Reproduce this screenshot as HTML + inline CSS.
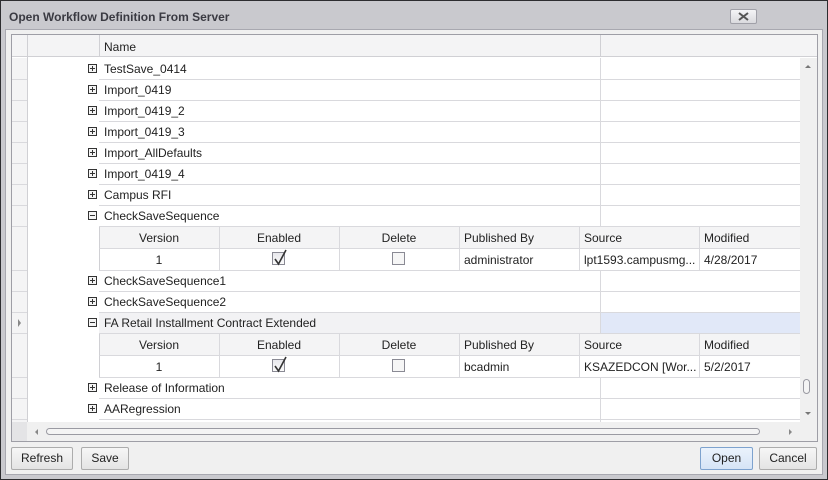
<!DOCTYPE html>
<html><head><style>
*{margin:0;padding:0;box-sizing:border-box}
body{width:828px;height:480px;overflow:hidden;background:#2d2d30;font-family:"Liberation Sans",sans-serif;font-size:12px;color:#222;position:relative}
.a{position:absolute}
.win{left:1px;top:1px;width:826px;height:478px;background:#c9c9ce}
.client{left:5px;top:29px;width:818px;height:446px;background:#f0f0f0;border:1px solid #a8a8b0}
.hl{position:absolute;height:1px;background:#d9d9dd}
.vl{position:absolute;width:1px;background:#d9d9dd}
.t{position:absolute;white-space:nowrap;line-height:14px}
.exp{position:absolute;width:9px;height:9px;border:1px solid #333;background:#f4f4f4}
.exp:before{content:"";position:absolute;left:1px;top:3px;width:5px;height:1px;background:#333}
.exp.p:after{content:"";position:absolute;left:3px;top:1px;width:1px;height:5px;background:#333}
.btn{position:absolute;height:23px;border:1px solid #acacac;border-radius:2px;background:linear-gradient(#f6f6f6,#e4e4e4);text-align:center;line-height:21px}
.cb{position:absolute;width:13px;height:13px;border:1px solid #8a8a94;background:linear-gradient(#e8e8ec,#fafafa)}
</style></head><body>
<div class="a win"></div>
<div class="t" style="left:9px;top:10px;font-weight:bold;color:#3a3a42;font-size:12px">Open Workflow Definition From Server</div>
<div class="a" style="left:730px;top:9px;width:27px;height:15px;border:1px solid #a0a0a8;border-radius:2px;background:linear-gradient(#f4f4f6,#dadade)"></div>
<svg class="a" style="left:738px;top:12px" width="11" height="9"><path d="M1 1L10 8M10 1L1 8" stroke="#555" stroke-width="2"/></svg>
<div class="a client"></div>
<!-- grid -->
<div class="a" style="left:11px;top:34px;width:807px;height:408px;border:1px solid #9e9ea6;background:#fff"></div>
<div class="a" style="left:12px;top:35px;width:805px;height:22px;background:#f4f4f5;border-bottom:1px solid #d0d0d4"></div>
<div class="vl" style="left:27px;top:35px;height:387px;background:#d0d0d4"></div>
<div class="vl" style="left:99px;top:35px;height:22px;background:#d0d0d4"></div>
<div class="vl" style="left:600px;top:35px;height:22px;background:#d0d0d4"></div>
<div class="t" style="left:104px;top:40px">Name</div>
<div class="a" style="left:12px;top:58px;width:15px;height:364px;background:#f4f4f5"></div>
<!-- vertical scrollbar -->
<div class="a" style="left:800px;top:58px;width:17px;height:364px;background:#f0f0f0"></div>
<svg class="a" style="left:804px;top:64px" width="8" height="5"><path d="M1 4L4 1L7 4Z" fill="#777"/></svg>
<div class="a" style="left:803px;top:379px;width:7px;height:15px;border:1px solid #9a9aa2;border-radius:4px;background:#f4f4f4"></div>
<svg class="a" style="left:804px;top:411px" width="8" height="5"><path d="M1 1L4 4L7 1Z" fill="#777"/></svg>
<!-- horizontal scrollbar -->
<div class="a" style="left:12px;top:422px;width:805px;height:19px;background:#f0f0f0"></div>
<div class="a" style="left:12px;top:422px;width:15px;height:19px;background:#e4e4e6"></div>
<svg class="a" style="left:34px;top:428px" width="5" height="8"><path d="M4 1L1 4L4 7Z" fill="#888"/></svg>
<div class="a" style="left:46px;top:428px;width:714px;height:7px;border:1px solid #9a9aa2;border-radius:4px;background:#f4f4f4"></div>
<svg class="a" style="left:788px;top:428px" width="5" height="8"><path d="M1 1L4 4L1 7Z" fill="#888"/></svg>
<div id="rows"></div>
<!-- highlighted row -->
<div class="a" style="left:99px;top:313px;width:501px;height:20px;background:#f2f2f4"></div>
<div class="a" style="left:600px;top:313px;width:200px;height:20px;background:#e1e8f8"></div>
<svg class="a" style="left:17px;top:319px" width="5" height="8"><path d="M1 0L4 4L1 8Z" fill="#888"/></svg>

<!-- row lines (name area) -->
<div class="hl" style="left:99px;top:79px;width:701px"></div>
<div class="hl" style="left:99px;top:100px;width:701px"></div>
<div class="hl" style="left:99px;top:121px;width:701px"></div>
<div class="hl" style="left:99px;top:142px;width:701px"></div>
<div class="hl" style="left:99px;top:163px;width:701px"></div>
<div class="hl" style="left:99px;top:184px;width:701px"></div>
<div class="hl" style="left:99px;top:205px;width:701px"></div>
<div class="hl" style="left:99px;top:226px;width:701px"></div>
<div class="hl" style="left:99px;top:270px;width:701px"></div>
<div class="hl" style="left:99px;top:291px;width:701px"></div>
<div class="hl" style="left:99px;top:312px;width:701px"></div>
<div class="hl" style="left:99px;top:333px;width:701px"></div>
<div class="hl" style="left:99px;top:377px;width:701px"></div>
<div class="hl" style="left:99px;top:398px;width:701px"></div>
<div class="hl" style="left:99px;top:419px;width:701px"></div>
<div class="vl" style="left:600px;top:58px;height:169px"></div>
<div class="vl" style="left:600px;top:270px;height:64px"></div>
<div class="vl" style="left:600px;top:377px;height:45px"></div>
<!-- left column lines -->
<div class="hl" style="left:12px;top:79px;width:15px"></div><div class="hl" style="left:12px;top:100px;width:15px"></div>
<div class="hl" style="left:12px;top:121px;width:15px"></div><div class="hl" style="left:12px;top:142px;width:15px"></div>
<div class="hl" style="left:12px;top:163px;width:15px"></div><div class="hl" style="left:12px;top:184px;width:15px"></div>
<div class="hl" style="left:12px;top:205px;width:15px"></div><div class="hl" style="left:12px;top:226px;width:15px"></div>
<div class="hl" style="left:12px;top:270px;width:15px"></div><div class="hl" style="left:12px;top:291px;width:15px"></div>
<div class="hl" style="left:12px;top:312px;width:15px"></div><div class="hl" style="left:12px;top:333px;width:15px"></div>
<div class="hl" style="left:12px;top:377px;width:15px"></div><div class="hl" style="left:12px;top:398px;width:15px"></div>
<div class="hl" style="left:12px;top:419px;width:15px"></div>

<!-- names -->
<div class="exp p" style="left:88px;top:64px"></div><div class="t" style="left:104px;top:62px">TestSave_0414</div>
<div class="exp p" style="left:88px;top:85px"></div><div class="t" style="left:104px;top:83px">Import_0419</div>
<div class="exp p" style="left:88px;top:106px"></div><div class="t" style="left:104px;top:104px">Import_0419_2</div>
<div class="exp p" style="left:88px;top:127px"></div><div class="t" style="left:104px;top:125px">Import_0419_3</div>
<div class="exp p" style="left:88px;top:148px"></div><div class="t" style="left:104px;top:146px">Import_AllDefaults</div>
<div class="exp p" style="left:88px;top:169px"></div><div class="t" style="left:104px;top:167px">Import_0419_4</div>
<div class="exp p" style="left:88px;top:190px"></div><div class="t" style="left:104px;top:188px">Campus RFI</div>
<div class="exp" style="left:88px;top:211px"></div><div class="t" style="left:104px;top:209px">CheckSaveSequence</div>
<div class="exp p" style="left:88px;top:276px"></div><div class="t" style="left:104px;top:274px">CheckSaveSequence1</div>
<div class="exp p" style="left:88px;top:297px"></div><div class="t" style="left:104px;top:295px">CheckSaveSequence2</div>
<div class="exp" style="left:88px;top:318px"></div><div class="t" style="left:104px;top:316px">FA Retail Installment Contract Extended</div>
<div class="exp p" style="left:88px;top:383px"></div><div class="t" style="left:104px;top:381px">Release of Information</div>
<div class="exp p" style="left:88px;top:404px"></div><div class="t" style="left:104px;top:402px">AARegression</div>

<!-- nested table 1 -->
<div class="a" style="left:99px;top:227px;width:701px;height:22px;background:#f4f4f5;border-left:1px solid #d0d0d4;border-bottom:1px solid #d9d9dd"></div>
<div class="a" style="left:99px;top:249px;width:701px;height:21px;border-left:1px solid #d0d0d4"></div>
<div class="vl" style="left:219px;top:227px;height:43px"></div><div class="vl" style="left:339px;top:227px;height:43px"></div>
<div class="vl" style="left:459px;top:227px;height:43px"></div><div class="vl" style="left:579px;top:227px;height:43px"></div>
<div class="vl" style="left:699px;top:227px;height:43px"></div>
<div class="t" style="left:99px;width:120px;text-align:center;top:231px">Version</div>
<div class="t" style="left:219px;width:120px;text-align:center;top:231px">Enabled</div>
<div class="t" style="left:339px;width:120px;text-align:center;top:231px">Delete</div>
<div class="t" style="left:464px;top:231px">Published By</div>
<div class="t" style="left:584px;top:231px">Source</div>
<div class="t" style="left:704px;top:231px">Modified</div>
<div class="t" style="left:99px;width:120px;text-align:center;top:253px">1</div>
<div class="cb" style="left:272px;top:252px"></div>
<svg class="a" style="left:272px;top:248px" width="16" height="18"><path d="M3 11L6.5 16L14 2" stroke="#333" stroke-width="1.6" fill="none"/></svg>
<div class="cb" style="left:392px;top:252px;background:#f6f6f6"></div>
<div class="t" style="left:464px;top:253px">administrator</div>
<div class="t" style="left:584px;top:253px">lpt1593.campusmg...</div>
<div class="t" style="left:704px;top:253px">4/28/2017</div>

<!-- nested table 2 -->
<div class="a" style="left:99px;top:334px;width:701px;height:22px;background:#f4f4f5;border-left:1px solid #d0d0d4;border-bottom:1px solid #d9d9dd"></div>
<div class="a" style="left:99px;top:356px;width:701px;height:21px;border-left:1px solid #d0d0d4"></div>
<div class="vl" style="left:219px;top:334px;height:43px"></div><div class="vl" style="left:339px;top:334px;height:43px"></div>
<div class="vl" style="left:459px;top:334px;height:43px"></div><div class="vl" style="left:579px;top:334px;height:43px"></div>
<div class="vl" style="left:699px;top:334px;height:43px"></div>
<div class="t" style="left:99px;width:120px;text-align:center;top:338px">Version</div>
<div class="t" style="left:219px;width:120px;text-align:center;top:338px">Enabled</div>
<div class="t" style="left:339px;width:120px;text-align:center;top:338px">Delete</div>
<div class="t" style="left:464px;top:338px">Published By</div>
<div class="t" style="left:584px;top:338px">Source</div>
<div class="t" style="left:704px;top:338px">Modified</div>
<div class="t" style="left:99px;width:120px;text-align:center;top:360px">1</div>
<div class="cb" style="left:272px;top:359px"></div>
<svg class="a" style="left:272px;top:355px" width="16" height="18"><path d="M3 11L6.5 16L14 2" stroke="#333" stroke-width="1.6" fill="none"/></svg>
<div class="cb" style="left:392px;top:359px;background:#f6f6f6"></div>
<div class="t" style="left:464px;top:360px">bcadmin</div>
<div class="t" style="left:584px;top:360px">KSAZEDCON [Wor...</div>
<div class="t" style="left:704px;top:360px">5/2/2017</div>

<!-- buttons -->
<div class="btn" style="left:11px;top:447px;width:62px">Refresh</div>
<div class="btn" style="left:81px;top:447px;width:48px">Save</div>
<div class="btn" style="left:700px;top:447px;width:53px;border-color:#7da2ce;background:linear-gradient(#eaf2fc,#d6e4f6)">Open</div>
<div class="btn" style="left:759px;top:447px;width:58px">Cancel</div>
</body></html>
